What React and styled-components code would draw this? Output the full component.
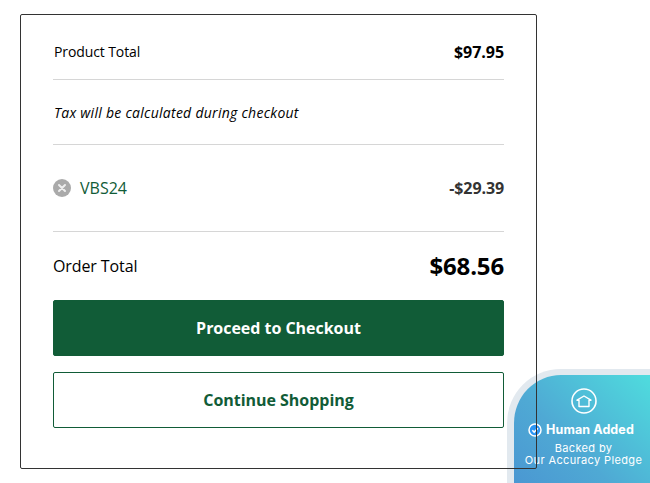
import React from "react";
import styled, { createGlobalStyle } from "styled-components";

const Global = createGlobalStyle`
  html, body { margin: 0; padding: 0; background: #fff; }
  body { width: 650px; height: 483px; overflow: hidden; position: relative; font-family: "Open Sans", sans-serif; color: #000; }
  * { box-sizing: border-box; }
`;
const Page = styled.div`
  padding: 14px 0 0 20px;
`;
const Card = styled.section`
  position: relative;
  z-index: 2;
  width: 517px;
  height: 455px;
  border: 1px solid #333;
  border-radius: 2px;
  padding: 0 32px;
`;
const Row = styled.div`
  display: flex;
  align-items: center;
  justify-content: space-between;
  height: ${p => p.$h}px;
  padding-top: ${p => p.$top || 0}px;
  border-bottom: ${p => (p.$line ? "1px solid #d6d6d6" : "none")};
`;
const Label = styled.span`
  font-size: 14px;
  letter-spacing: -0.1px;
  margin-left: 1px;
`;
const Amount = styled.span`
  font-size: 16px;
  font-weight: 700;
  letter-spacing: -0.05px;
`;
const Note = styled.span`
  font-size: 14px;
  font-style: italic;
  letter-spacing: 0.27px;
  margin-left: 1px;
`;
const Coupon = styled.div`
  display: flex;
  align-items: center;
  gap: 9px;
`;
const CouponCode = styled.span`
  font-size: 16px;
  color: #115c37;
  font-weight: 500;
`;
const Discount = styled.span`
  font-size: 16px;
  font-weight: 700;
  color: #333;
  letter-spacing: -0.1px;
`;
const TotalLabel = styled.span`
  font-size: 16px;
  letter-spacing: -0.1px;
`;
const TotalAmount = styled.span`
  font-size: 24px;
  font-weight: 700;
  letter-spacing: -0.15px;
  position: relative;
  top: -1px;
`;
const Button = styled.button`
  display: block;
  width: 100%;
  height: 56px;
  margin-bottom: 16px;
  border: 1px solid #115c37;
  border-radius: 2px;
  font-family: "Open Sans", sans-serif;
  font-size: 16px;
  font-weight: 700;
  letter-spacing: -0.03px;
  background: ${p => (p.$primary ? "#115c37" : "transparent")};
  color: ${p => (p.$primary ? "#fff" : "#115c37")};
`;
const Badge = styled.aside`
  position: absolute;
  z-index: 1;
  left: 507px;
  top: 369px;
  width: 143px;
  height: 114px;
  border-top-left-radius: 54px;
  border-style: solid;
  border-color: #e2e9ef;
  border-width: 6px 0 0 7px;
  background: linear-gradient(45deg, #4a96d2 0%, #4fa9d4 40%, #4fdede 100%) border-box;
  color: #fff;
  font-family: Inter, sans-serif;
  display: flex;
  flex-direction: column;
  align-items: center;
  padding: 13px 0 0 3px;
`;
const Heading = styled.div`
  display: flex;
  align-items: center;
  gap: 4px;
  margin: 8px 0 0 -5px;
  font-size: 12.5px;
  font-weight: 700;
  letter-spacing: 0.1px;
  line-height: 16px;
  white-space: nowrap;
  svg { flex-shrink: 0; }
`;
const Sub = styled.div`
  margin-top: 4px;
  font-size: 11px;
  line-height: 12px;
  text-align: center;
  letter-spacing: 0.36px;
  white-space: nowrap;
`;

const RemoveIcon = () => (
  <svg width="18" height="18" viewBox="0 0 18 18">
    <circle cx="9" cy="9" r="9" fill="#aaa" />
    <path d="M6 6l6 6M12 6l-6 6" stroke="#eee" strokeWidth="2" strokeLinecap="round" />
  </svg>
);
const HomeIcon = () => (
  <svg width="26" height="26" viewBox="0 0 26 26" fill="none" stroke="#fff">
    <circle cx="13" cy="13" r="12" strokeWidth="1.6" />
    <path d="M6 12.2L13 8l7 4.2h-2v6.3H8v-6.3z" strokeWidth="1.4" strokeLinejoin="round" />
  </svg>
);
const CheckIcon = () => (
  <svg width="14" height="14" viewBox="0 0 14 14">
    <circle cx="7" cy="7" r="6" fill="#2b96f5" stroke="#fff" strokeWidth="1.5" />
    <path d="M4.3 7.2l1.9 1.9L9.9 5.2" fill="none" stroke="#fff" strokeWidth="1.5" />
  </svg>
);

export default function App() {
  return (
    <>
      <Global />
      <Page>
        <Card>
          <Row $h={65} $top={9} $line>
            <Label>Product Total</Label>
            <Amount>$97.95</Amount>
          </Row>
          <Row $h={65} $line>
            <Note>Tax will be calculated during checkout</Note>
          </Row>
          <Row $h={87} $line>
            <Coupon>
              <RemoveIcon />
              <CouponCode>VBS24</CouponCode>
            </Coupon>
            <Discount>-$29.39</Discount>
          </Row>
          <Row $h={68}>
            <TotalLabel>Order Total</TotalLabel>
            <TotalAmount>$68.56</TotalAmount>
          </Row>
          <Button $primary>Proceed to Checkout</Button>
          <Button>Continue Shopping</Button>
        </Card>
      </Page>
      <Badge>
        <HomeIcon />
        <Heading>
          <CheckIcon />
          Human Added
        </Heading>
        <Sub>
          Backed by
          <br />
          Our Accuracy Pledge
        </Sub>
      </Badge>
    </>
  );
}
